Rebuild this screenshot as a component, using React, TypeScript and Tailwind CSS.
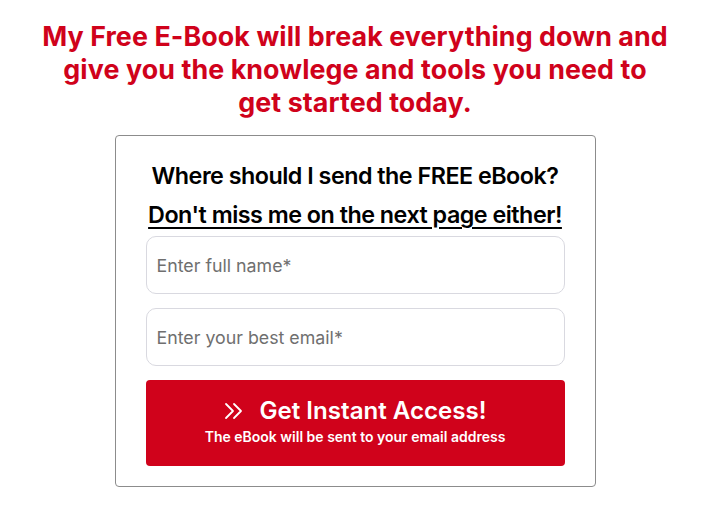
import React from 'react';

const ChevronsRight: React.FC = () => (
  <svg width="20" height="18" viewBox="0 0 20 18" fill="none" stroke="currentColor" strokeWidth="1.8" strokeLinecap="round" strokeLinejoin="round">
    <path d="M2 2l7 7-7 7" />
    <path d="M10 2l7 7-7 7" />
  </svg>
);

const App: React.FC = () => {
  return (
    <div className="min-h-screen bg-white font-['Inter',sans-serif] pt-[20px] pl-[4px]">
      <h1 className="whitespace-nowrap text-center text-[26.8px] leading-[33px] font-bold text-[#d0021b] tracking-[0.1px]">
        My Free E-Book will break everything down and
        <br />
        give you the knowlege and tools you need to
        <br />
        get started today.
      </h1>

      <div className="mx-auto mt-[16px] w-[481px] rounded-[4px] border border-[#8c8c8c] px-[30px] pt-[25px] pb-[20px]">
        <p className="text-center text-[23.3px] leading-[30px] font-semibold text-black tracking-[-0.5px]">
          Where should I send the FREE eBook?
        </p>
        <p className="mt-[9px] text-center text-[23.3px] leading-[30px] font-semibold text-black tracking-[-0.5px] underline underline-offset-[4px] decoration-[2px]">
          Don't miss me on the next page either!
        </p>

        <div className="mt-[6px] flex flex-col gap-[14px]">
          <input
            type="text"
            placeholder="Enter full name*"
            className="h-[58px] w-full rounded-[10px] border border-[#d9d9e0] px-[10px] text-[17.8px] text-[#333] placeholder:text-[#6f6f6f] outline-none"
          />
          <input
            type="email"
            placeholder="Enter your best email*"
            className="h-[58px] w-full rounded-[10px] border border-[#d9d9e0] px-[10px] text-[17.8px] text-[#333] placeholder:text-[#6f6f6f] outline-none"
          />
        </div>

        <button className="mt-[14px] flex h-[86px] w-full flex-col items-center justify-center rounded-[4px] bg-[#d0021b] pb-[4px] text-white">
          <span className="flex items-center gap-[16px] text-[24.1px] leading-[30px] font-semibold">
            <ChevronsRight />
            Get Instant Access!
          </span>
          <span className="mt-[2px] text-[14px] leading-[18px] font-semibold">
            The eBook will be sent to your email address
          </span>
        </button>
      </div>
    </div>
  );
};

export default App;
